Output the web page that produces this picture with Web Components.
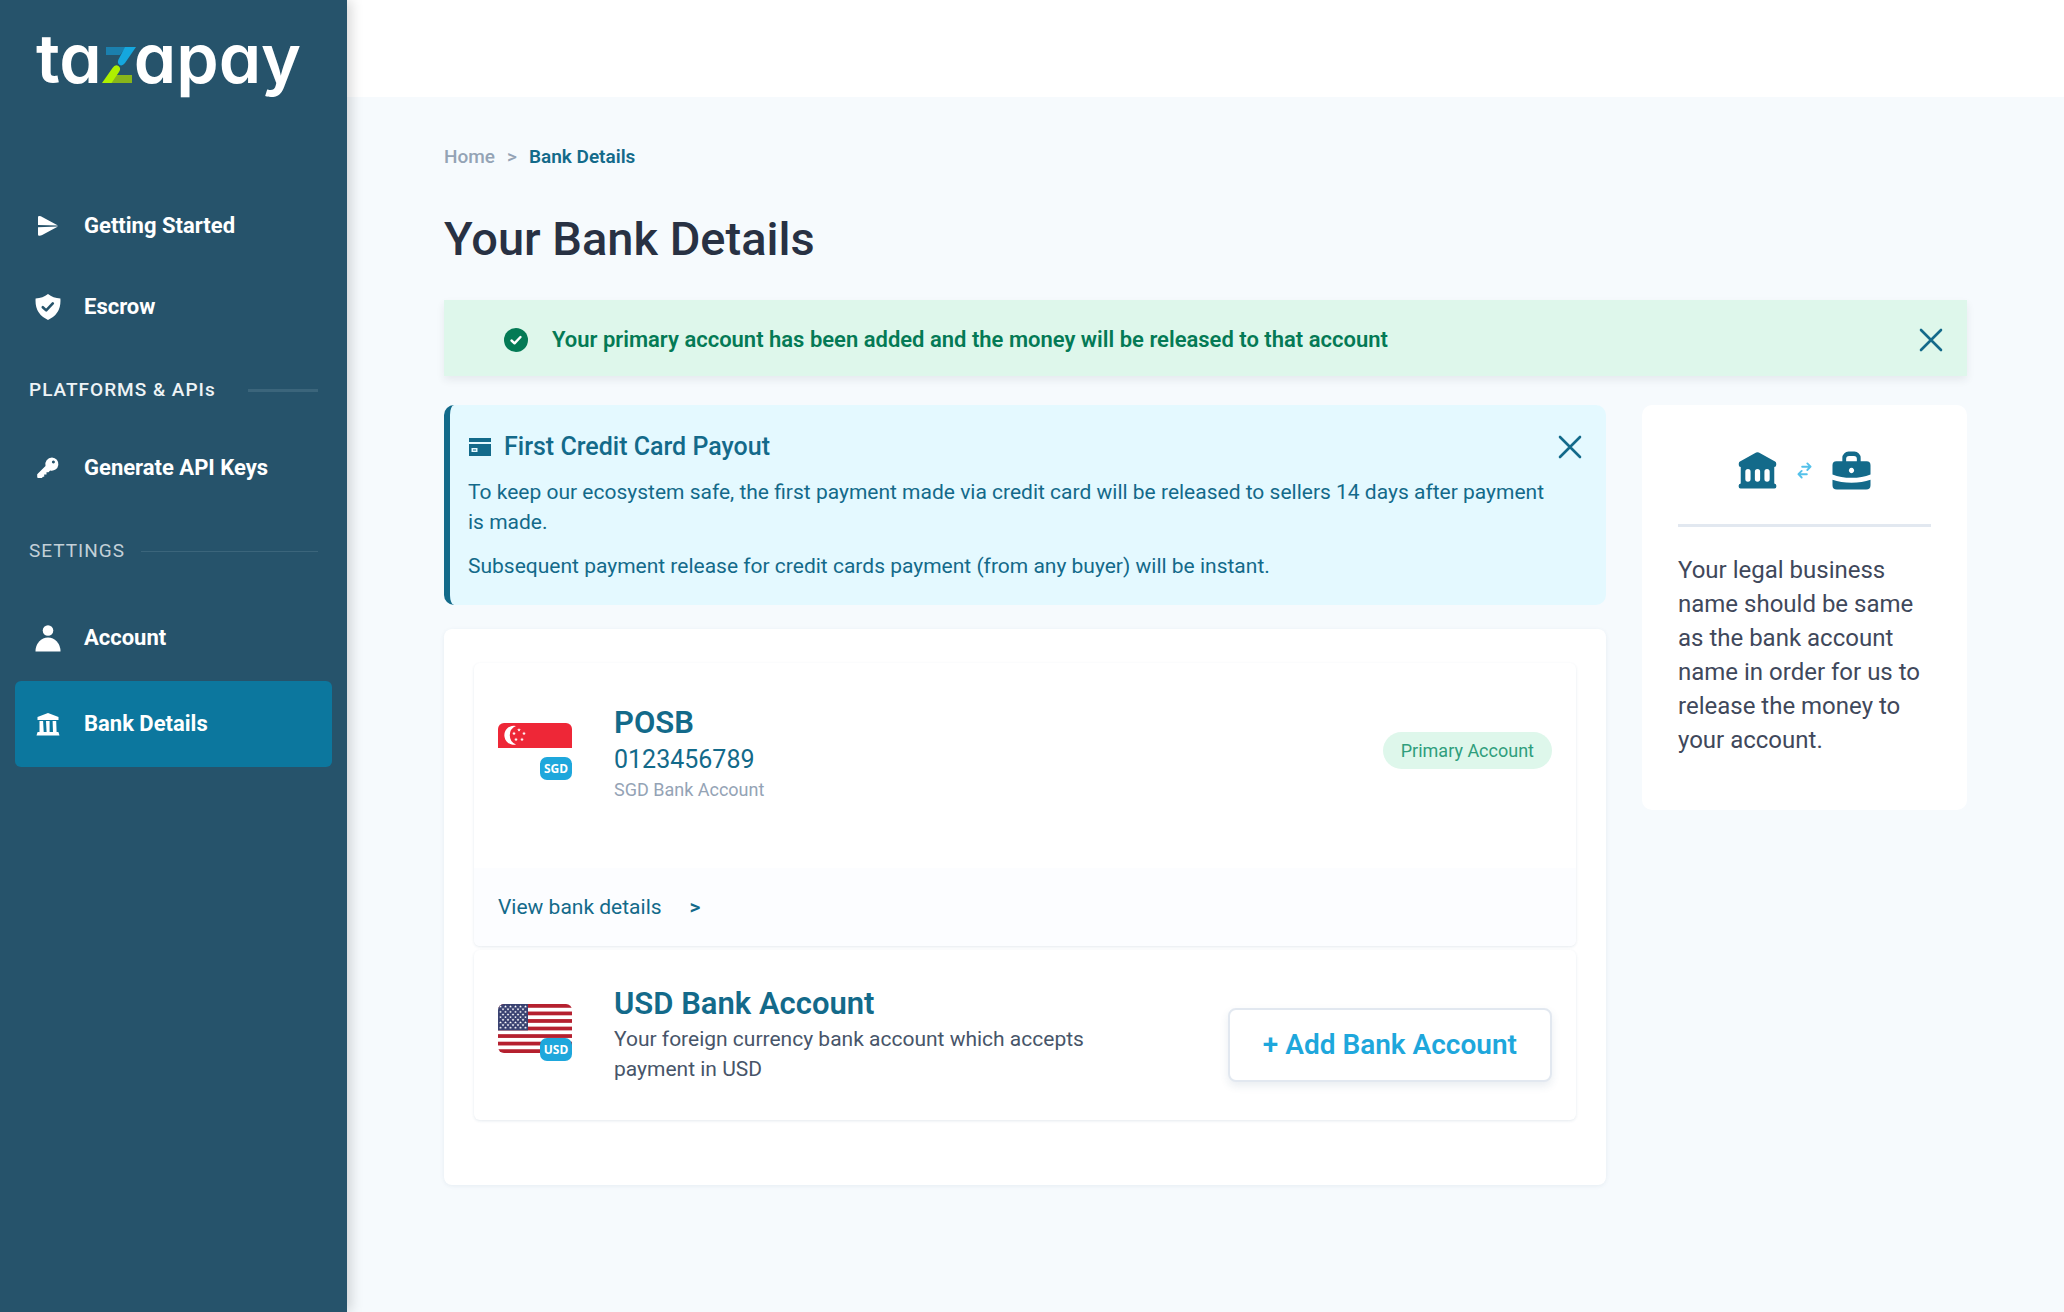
<!DOCTYPE html>
<html lang="en">
<head>
<meta charset="utf-8">
<meta name="viewport" content="width=device-width, initial-scale=1">
<title>Tazapay - Bank Details</title>
<style>
    * {
        box-sizing: border-box;
    }
    body {
        margin: 0;
        font-family: Roboto, "Liberation Sans", sans-serif;
        font-size: 21px;
        line-height: 30px;
        color: #475569;
        background-color: #f6fafd;
        --navy: #26536b;
        --teal: #136a8a;
        --blue: #1ea7dc;
        --grey: #94a3b5;
        --green: #047a55;
        --mint: #def7eb;
    }
</style>
</head>
<body>
<app-shell>
    <side-bar slot="sidebar">
        <nav-item icon="send" href="#start">Getting Started</nav-item>
        <nav-item icon="shield" href="#escrow">Escrow</nav-item>
        <nav-section>PLATFORMS &amp; APIs</nav-section>
        <nav-item icon="key" href="#keys">Generate API Keys</nav-item>
        <nav-section light>SETTINGS</nav-section>
        <nav-item icon="person" href="#account" tall>Account</nav-item>
        <nav-item icon="bank" href="#bank" tall active>Bank Details</nav-item>
    </side-bar>

    <page-header current="Bank Details">Your Bank Details</page-header>

    <alert-banner>Your primary account has been added and the money will be released to that account</alert-banner>

    <two-columns>
        <info-callout heading="First Credit Card Payout">
            <p>To keep our ecosystem safe, the first payment made via credit card will be released to sellers 14 days after payment is made.</p>
            <p>Subsequent payment release for credit cards payment (from any buyer) will be instant.</p>
        </info-callout>

        <account-list>
            <bank-account heading="POSB" currency="SGD">
                <span slot="number">0123456789</span>
                <span slot="type">SGD Bank Account</span>
                <status-pill slot="action">Primary Account</status-pill>
                <details-link slot="footer" href="#posb">View bank details</details-link>
            </bank-account>
            <bank-account heading="USD Bank Account" currency="USD" compact>
                <span slot="text">Your foreign currency bank account which accepts payment in USD</span>
                <add-button slot="action">+ Add Bank Account</add-button>
            </bank-account>
        </account-list>

        <side-note slot="aside">Your legal business name should be same as the bank account name in order for us to release the money to your account.</side-note>
    </two-columns>
</app-shell>

<script>
const icons = {
    send: `<svg viewBox="0 0 26 26"><path fill="currentColor" d="M3 4.200q0-1.400 1.400-1.200 1.600.2 2.800.9L23 12.600 3 12zM3 14.200l20-.8L7.200 22q-1.200.7-2.800.8Q3 23 3 21.600z"/></svg>`,
    shield: `<svg viewBox="0 0 26 26"><path fill="currentColor" d="M13 0q5 4 12.400 4.600Q26.500 20 13 26-.5 20 .6 4.600 8 4 13 0z"/><path fill="none" stroke="var(--navy)" stroke-width="2.600" stroke-linecap="round" stroke-linejoin="round" d="M7.800 13.200l3.400 3.200 6.600-7"/></svg>`,
    key: `<svg viewBox="0 0 26 26"><path fill="currentColor" fill-rule="evenodd" d="M17 2.500a6.600 6.600 0 1 1-1.800 13l-1.700 1.800h-2v2.200H9.200v2.300H8l-1.200 1.300H3.200q-1 0-1-1v-2.800l8.300-8.300A6.700 6.700 0 0 1 17 2.500zm1.400 2.900a1.500 1.500 0 1 0 .01 0z"/></svg>`,
    person: `<svg viewBox="0 0 26 28"><circle cx="13" cy="6.500" r="5.300" fill="currentColor"/><path fill="currentColor" d="M.5 27.500a12.500 14 0 0 1 25 0z"/></svg>`,
    bank: `<svg viewBox="0 0 26 26"><path fill="currentColor" d="M13 2l10.500 4v3H2.500V6zM4.500 10h3.600l.6 11H4.500zM11 10h3.600v11H11.600zM17.600 10h3.600l.4 11h-3.600zM2.600 21h20.800l1.100 3.500h-23z"/></svg>`,
    check: `<svg viewBox="0 0 24 24"><circle cx="12" cy="12" r="12" fill="currentColor"/><path fill="none" stroke="#fff" stroke-width="2.400" stroke-linecap="round" stroke-linejoin="round" d="M7.500 12.500l3 2.800 6-6.300"/></svg>`,
    close: `<svg viewBox="0 0 24 24"><path fill="none" stroke="currentColor" stroke-width="2.600" stroke-linecap="round" d="M2 2l20 20M22 2L2 22"/></svg>`,
    card: `<svg viewBox="0 0 24 20"><path fill="currentColor" fill-rule="evenodd" d="M1 1h22v4H1zM1 7h22v12H1zM3.500 11v4h6v-4zM5 12.500h3v1H5z"/></svg>`,
    building: `<svg viewBox="0 0 40 38"><path fill="currentColor" fill-rule="evenodd" d="M18.600.6q1.400-.8 2.800 0L38 9.700q1.200.7 1.200 2v1.600q0 2-2 2v17q2.200 0 2.200 2.600 0 2.600-2 2.600H2.600q-2 0-2-2.600 0-2.600 2.200-2.600v-17q-2 0-2-2v-1.600q0-1.300 1.200-2zM7.500 20.200v7.600a2.700 2.700 0 0 0 5.400 0v-7.600a2.700 2.700 0 0 0-5.400 0zM17.300 20.200v7.600a2.700 2.700 0 0 0 5.400 0v-7.600a2.700 2.700 0 0 0-5.400 0zM27.100 20.200v7.600a2.700 2.700 0 0 0 5.400 0v-7.600a2.700 2.700 0 0 0-5.400 0z"/></svg>`,
    swap: `<svg viewBox="0 0 16 18"><path fill="none" stroke="#54c1ea" stroke-width="2" stroke-linecap="round" stroke-linejoin="round" d="M5.500 5H14M11 1.500L14.500 5 11 8.500M10.500 13H2M5 9.500L1.500 13 5 16.500"/></svg>`,
    briefcase: `<svg viewBox="0 0 40 40"><path fill="currentColor" fill-rule="evenodd" d="M10.600 10.500V7A6.500 6.500 0 0 1 17 .5h6A6.500 6.500 0 0 1 29.400 7v3.500H35.500q4 0 4 4V24Q31 27.500 20 27.500T.5 24v-9.500q0-4 4-4zM14.500 10.500h11V8q0-3-3-3h-5q-3 0-3 3zM20 17.300a2.700 2.700 0 1 0 .01 0z"/><path fill="currentColor" d="M.5 29.500Q9 32.500 20 32.500t19.500-3V35q0 4.500-4.500 4.500H5Q.5 39.500.5 35z"/></svg>`
};

class AppIcon extends HTMLElement {
    constructor() {
        super();
        this.shadowDOM = this.attachShadow({mode: "open"});
    }

    connectedCallback() {
        this.shadowDOM.innerHTML = `
        <style>
            :host {
                display: inline-flex;
                flex: none;
                width: 26px;
            }
            svg {
                display: block;
                width: 100%;
            }
        </style>
        ${icons[this.getAttribute("name")]}
        `;
    }
}

class AppShell extends HTMLElement {
    constructor() {
        super();
        this.shadowDOM = this.attachShadow({mode: "open"});
        this.shadowDOM.innerHTML = `
        <style>
            :host {
                display: grid;
                grid-template-columns: 347px 1fr;
                min-height: 100vh;
            }
            header {
                height: 97px;
                background-color: white;
            }
            main {
                padding: 47px 97px;
            }
        </style>
        <slot name="sidebar"></slot>
        <div>
            <header></header>
            <main><slot></slot></main>
        </div>
        `;
    }
}

class SideBar extends HTMLElement {
    constructor() {
        super();
        this.shadowDOM = this.attachShadow({mode: "open"});
        this.shadowDOM.innerHTML = `
        <style>
            :host {
                display: block;
                z-index: 1;
                color: white;
                background-color: var(--navy);
                box-shadow: 4px 0 12px rgba(0, 0, 0, 0.16);
            }
            .logo {
                display: flex;
                align-items: baseline;
                height: 185px;
                padding: 16px 0 0 36px;
                box-sizing: border-box;
                font: 600 68px/84px Inter, sans-serif;
                font-feature-settings: "cv11";
                color: white;
                text-decoration: none;
            }
            .logo svg {
                width: 32px;
                height: 36px;
                overflow: visible;
            }
        </style>
        <a class="logo" href="#home" aria-label="tazapay">
            <span>ta</span>
            <svg viewBox="0 0 32 36">
                <path fill="#1b80ae" d="M4 0h20l-6 8H4z"/>
                <path fill="#88b51b" d="M12 28h18v8H2z"/>
                <path fill="#15a7de" d="M23 0h11L23 16q-3 4-6 1.500-2-2-.5-5z"/>
                <path fill="#aef000" d="M0 36l10.500-15q2.500-4 6-2 3 2.500.5 6L9.500 36z"/>
            </svg>
            <span>apay</span>
        </a>
        <nav><slot></slot></nav>
        `;
    }
}

class NavItem extends HTMLElement {
    constructor() {
        super();
        this.shadowDOM = this.attachShadow({mode: "open"});
    }

    connectedCallback() {
        this.shadowDOM.innerHTML = `
        <style>
            :host {
                display: block;
                margin: 0 15px;
            }
            a {
                display: flex;
                align-items: center;
                gap: 23px;
                height: 81px;
                padding: 0 20px;
                border-radius: 6px;
                font-size: 22px;
                font-weight: 700;
                color: white;
                text-decoration: none;
            }
            :host([tall]) a {
                height: 86px;
            }
            :host([active]) a {
                background-color: #0c779e;
            }
        </style>
        <a href="${this.getAttribute("href")}"><app-icon name="${this.getAttribute("icon")}"></app-icon><slot></slot></a>
        `;
    }
}

class NavSection extends HTMLElement {
    constructor() {
        super();
        this.shadowDOM = this.attachShadow({mode: "open"});
        this.shadowDOM.innerHTML = `
        <style>
            :host {
                display: flex;
                align-items: center;
                gap: 32px;
                height: 80px;
                padding: 6px 29px 0;
                font-size: 19px;
                font-weight: 500;
                letter-spacing: 1px;
                color: #eef3f6;
            }
            :host([light]) {
                gap: 16px;
                margin-bottom: 7px;
                font-weight: 400;
                color: #c3d0d8;
            }
            i {
                flex: 1;
                height: 3px;
                background-color: #3b657b;
            }
            :host([light]) i {
                height: 1px;
            }
        </style>
        <slot></slot><i></i>
        `;
    }
}

class PageHeader extends HTMLElement {
    constructor() {
        super();
        this.shadowDOM = this.attachShadow({mode: "open"});
    }

    connectedCallback() {
        this.shadowDOM.innerHTML = `
        <style>
            :host {
                display: block;
            }
            .crumbs {
                display: flex;
                gap: 12px;
                font-size: 19px;
                font-weight: 500;
                line-height: 26px;
                color: var(--grey);
            }
            .crumbs a {
                color: inherit;
                text-decoration: none;
            }
            .crumbs b {
                font-weight: 600;
                color: var(--teal);
            }
            h1 {
                margin: 40px 0 32px;
                font-size: 47px;
                font-weight: 500;
                line-height: 58px;
                color: #283143;
            }
        </style>
        <nav class="crumbs"><a href="#home">Home</a><span>&gt;</span><b>${this.getAttribute("current")}</b></nav>
        <h1><slot></slot></h1>
        `;
    }
}

class CloseButton extends HTMLElement {
    constructor() {
        super();
        this.shadowDOM = this.attachShadow({mode: "open"});
        this.shadowDOM.innerHTML = `
        <style>
            :host {
                display: block;
            }
            button {
                display: flex;
                padding: 0;
                border: 0;
                background: none;
                color: var(--teal);
                cursor: pointer;
            }
            app-icon {
                width: 24px;
            }
        </style>
        <button type="button" aria-label="Close"><app-icon name="close"></app-icon></button>
        `;
    }
}

class AlertBanner extends HTMLElement {
    constructor() {
        super();
        this.shadowDOM = this.attachShadow({mode: "open"});
        this.shadowDOM.innerHTML = `
        <style>
            :host {
                display: flex;
                align-items: center;
                gap: 24px;
                padding: 25px 24px 21px 60px;
                font-size: 22px;
                font-weight: 600;
                color: var(--green);
                background-color: var(--mint);
                box-shadow: 0 4px 8px rgba(40, 49, 67, 0.08);
            }
            app-icon {
                width: 24px;
            }
            span {
                flex: 1;
            }
        </style>
        <app-icon name="check"></app-icon>
        <span role="status"><slot></slot></span>
        <close-button></close-button>
        `;
    }
}

class TwoColumns extends HTMLElement {
    constructor() {
        super();
        this.shadowDOM = this.attachShadow({mode: "open"});
        this.shadowDOM.innerHTML = `
        <style>
            :host {
                display: grid;
                grid-template-columns: 1fr 325px;
                align-items: start;
                gap: 36px;
                margin-top: 29px;
            }
            .content {
                display: grid;
                gap: 24px;
            }
        </style>
        <div class="content"><slot></slot></div>
        <slot name="aside"></slot>
        `;
    }
}

class InfoCallout extends HTMLElement {
    constructor() {
        super();
        this.shadowDOM = this.attachShadow({mode: "open"});
    }

    connectedCallback() {
        this.shadowDOM.innerHTML = `
        <style>
            :host {
                display: block;
                padding: 26px 24px 24px 18px;
                border-left: 6px solid var(--teal);
                border-radius: 10px;
                color: var(--teal);
                background-color: #e4f9ff;
            }
            .head {
                display: flex;
                align-items: center;
                gap: 12px;
            }
            .head app-icon {
                width: 24px;
            }
            h2 {
                flex: 1;
                margin: 0;
                font-size: 25px;
                font-weight: 500;
                line-height: 32px;
            }
            ::slotted(p) {
                margin: 0;
                padding: 14px 24px 0 0;
            }
            ::slotted(p + p) {
                padding-top: 11px;
            }
        </style>
        <div class="head">
            <app-icon name="card"></app-icon>
            <h2>${this.getAttribute("heading")}</h2>
            <close-button></close-button>
        </div>
        <slot></slot>
        `;
    }
}

class AccountList extends HTMLElement {
    constructor() {
        super();
        this.shadowDOM = this.attachShadow({mode: "open"});
        this.shadowDOM.innerHTML = `
        <style>
            :host {
                display: grid;
                gap: 4px;
                padding: 34px 30px 65px;
                border-radius: 8px;
                background-color: white;
                box-shadow: 0 1px 4px rgba(40, 80, 120, 0.08);
            }
        </style>
        <slot></slot>
        `;
    }
}

class CurrencyFlag extends HTMLElement {
    constructor() {
        super();
        this.shadowDOM = this.attachShadow({mode: "open"});
    }

    star(x, y, r) {
        let points = "";
        for (let i = 0; i < 10; i++) {
            const radius = i % 2 ? r * 0.4 : r;
            const angle = Math.PI * i / 5;
            points += `${x + radius * Math.sin(angle)},${y - radius * Math.cos(angle)} `;
        }
        return `<polygon fill="#fff" points="${points}"/>`;
    }

    singapore() {
        const stars = [[21, 7], [16, 10.5], [26, 10.5], [18, 16.5], [24, 16.5]];
        return `
            <rect width="74" height="49" fill="#fff"/>
            <rect width="74" height="25" fill="#ee2737"/>
            <path fill="#fff" d="M18 3a9.500 9.500 0 1 0 0 18.500 10 10 0 0 1 0-18.500z"/>
            ${stars.map(([x, y]) => this.star(x, y, 2)).join("")}
        `;
    }

    usa() {
        let shapes = `<rect width="74" height="49" fill="#fff"/>`;
        for (let i = 0; i < 7; i++) {
            shapes += `<rect y="${i * 7.54}" width="74" height="3.77" fill="#b5202f"/>`;
        }
        shapes += `<rect width="30" height="26.4" fill="#3a4271"/>`;
        for (let row = 0; row < 9; row++) {
            const count = row % 2 ? 5 : 6;
            for (let col = 0; col < count; col++) {
                shapes += this.star(2.5 + (row % 2) * 2.5 + col * 5, 2.6 + row * 2.64, 1.5);
            }
        }
        return shapes;
    }

    connectedCallback() {
        const code = this.getAttribute("code");
        this.shadowDOM.innerHTML = `
        <style>
            :host {
                display: block;
                position: relative;
                width: 74px;
                height: 49px;
            }
            svg {
                display: block;
                border-radius: 6px;
            }
            span {
                position: absolute;
                right: 0;
                bottom: -8px;
                width: 32px;
                border-radius: 7px;
                font: 700 12px/23px "Noto Sans", sans-serif;
                text-align: center;
                color: white;
                background-color: var(--blue);
            }
        </style>
        <svg width="74" height="49" viewBox="0 0 74 49">${code === "SGD" ? this.singapore() : this.usa()}</svg>
        <span>${code}</span>
        `;
    }
}

class BankAccount extends HTMLElement {
    constructor() {
        super();
        this.shadowDOM = this.attachShadow({mode: "open"});
    }

    connectedCallback() {
        this.shadowDOM.innerHTML = `
        <style>
            :host {
                display: block;
                border-radius: 6px;
                overflow: hidden;
                background-color: white;
                box-shadow: 0 1px 3px rgba(40, 80, 120, 0.12);
            }
            .row {
                display: grid;
                grid-template-columns: 74px 1fr auto;
                column-gap: 42px;
                min-height: 205px;
                padding: 40px 24px 0;
                box-sizing: border-box;
            }
            :host([compact]) .row {
                min-height: 170px;
                padding-top: 34px;
            }
            currency-flag {
                margin-top: 20px;
            }
            h3 {
                margin: 0;
                font-size: 31px;
                font-weight: 600;
                line-height: 40px;
                color: var(--teal);
            }
            slot[name="number"] {
                display: block;
                font-size: 25px;
                line-height: 34px;
                color: var(--teal);
            }
            slot[name="type"] {
                display: block;
                font-size: 18px;
                line-height: 26px;
                color: var(--grey);
            }
            slot[name="text"] {
                display: block;
                max-width: 500px;
            }
            .action {
                margin-top: 29px;
            }
            :host([compact]) .action {
                margin-top: 24px;
            }
        </style>
        <div class="row">
            <currency-flag code="${this.getAttribute("currency")}"></currency-flag>
            <div>
                <h3>${this.getAttribute("heading")}</h3>
                <slot name="number"></slot>
                <slot name="type"></slot>
                <slot name="text"></slot>
            </div>
            <div class="action"><slot name="action"></slot></div>
        </div>
        <slot name="footer"></slot>
        `;
    }
}

class StatusPill extends HTMLElement {
    constructor() {
        super();
        this.shadowDOM = this.attachShadow({mode: "open"});
        this.shadowDOM.innerHTML = `
        <style>
            :host {
                display: block;
                padding: 0 18px;
                border-radius: 19px;
                font-size: 18px;
                line-height: 37px;
                color: #2f9e7c;
                background-color: var(--mint);
            }
        </style>
        <slot></slot>
        `;
    }
}

class DetailsLink extends HTMLElement {
    constructor() {
        super();
        this.shadowDOM = this.attachShadow({mode: "open"});
    }

    connectedCallback() {
        this.shadowDOM.innerHTML = `
        <style>
            :host {
                display: block;
                padding: 24px;
                background-color: #fcfdff;
            }
            a {
                display: inline-flex;
                gap: 28px;
                color: var(--teal);
                text-decoration: none;
            }
            b {
                font-weight: 600;
            }
        </style>
        <a href="${this.getAttribute("href")}"><slot></slot><b>&gt;</b></a>
        `;
    }
}

class AddButton extends HTMLElement {
    constructor() {
        super();
        this.shadowDOM = this.attachShadow({mode: "open"});
        this.shadowDOM.innerHTML = `
        <style>
            :host {
                display: block;
            }
            button {
                padding: 18px 33px;
                border: 2px solid #e2e8f0;
                border-radius: 8px;
                font: inherit;
                font-size: 28px;
                font-weight: 600;
                line-height: 34px;
                color: var(--blue);
                background-color: white;
                box-shadow: 0 4px 8px rgba(40, 80, 120, 0.1);
                cursor: pointer;
            }
        </style>
        <button type="button"><slot></slot></button>
        `;
    }
}

class SideNote extends HTMLElement {
    constructor() {
        super();
        this.shadowDOM = this.attachShadow({mode: "open"});
        this.shadowDOM.innerHTML = `
        <style>
            :host {
                display: block;
                padding: 46px 36px 53px;
                border-radius: 10px;
                font-size: 24px;
                line-height: 34px;
                color: #3f485b;
                background-color: white;
            }
            .icons {
                display: flex;
                align-items: center;
                justify-content: center;
                gap: 20px;
                padding-bottom: 34px;
                border-bottom: 3px solid #e2e8f0;
                color: var(--teal);
            }
            app-icon {
                width: 39px;
            }
            app-icon[name="swap"] {
                width: 15px;
            }
            p {
                margin: 26px 0 0;
            }
        </style>
        <div class="icons">
            <app-icon name="building"></app-icon>
            <app-icon name="swap"></app-icon>
            <app-icon name="briefcase"></app-icon>
        </div>
        <p><slot></slot></p>
        `;
    }
}

customElements.define("app-icon", AppIcon);
customElements.define("app-shell", AppShell);
customElements.define("side-bar", SideBar);
customElements.define("nav-item", NavItem);
customElements.define("nav-section", NavSection);
customElements.define("page-header", PageHeader);
customElements.define("close-button", CloseButton);
customElements.define("alert-banner", AlertBanner);
customElements.define("two-columns", TwoColumns);
customElements.define("info-callout", InfoCallout);
customElements.define("account-list", AccountList);
customElements.define("currency-flag", CurrencyFlag);
customElements.define("bank-account", BankAccount);
customElements.define("status-pill", StatusPill);
customElements.define("details-link", DetailsLink);
customElements.define("add-button", AddButton);
customElements.define("side-note", SideNote);
</script>
</body>
</html>
